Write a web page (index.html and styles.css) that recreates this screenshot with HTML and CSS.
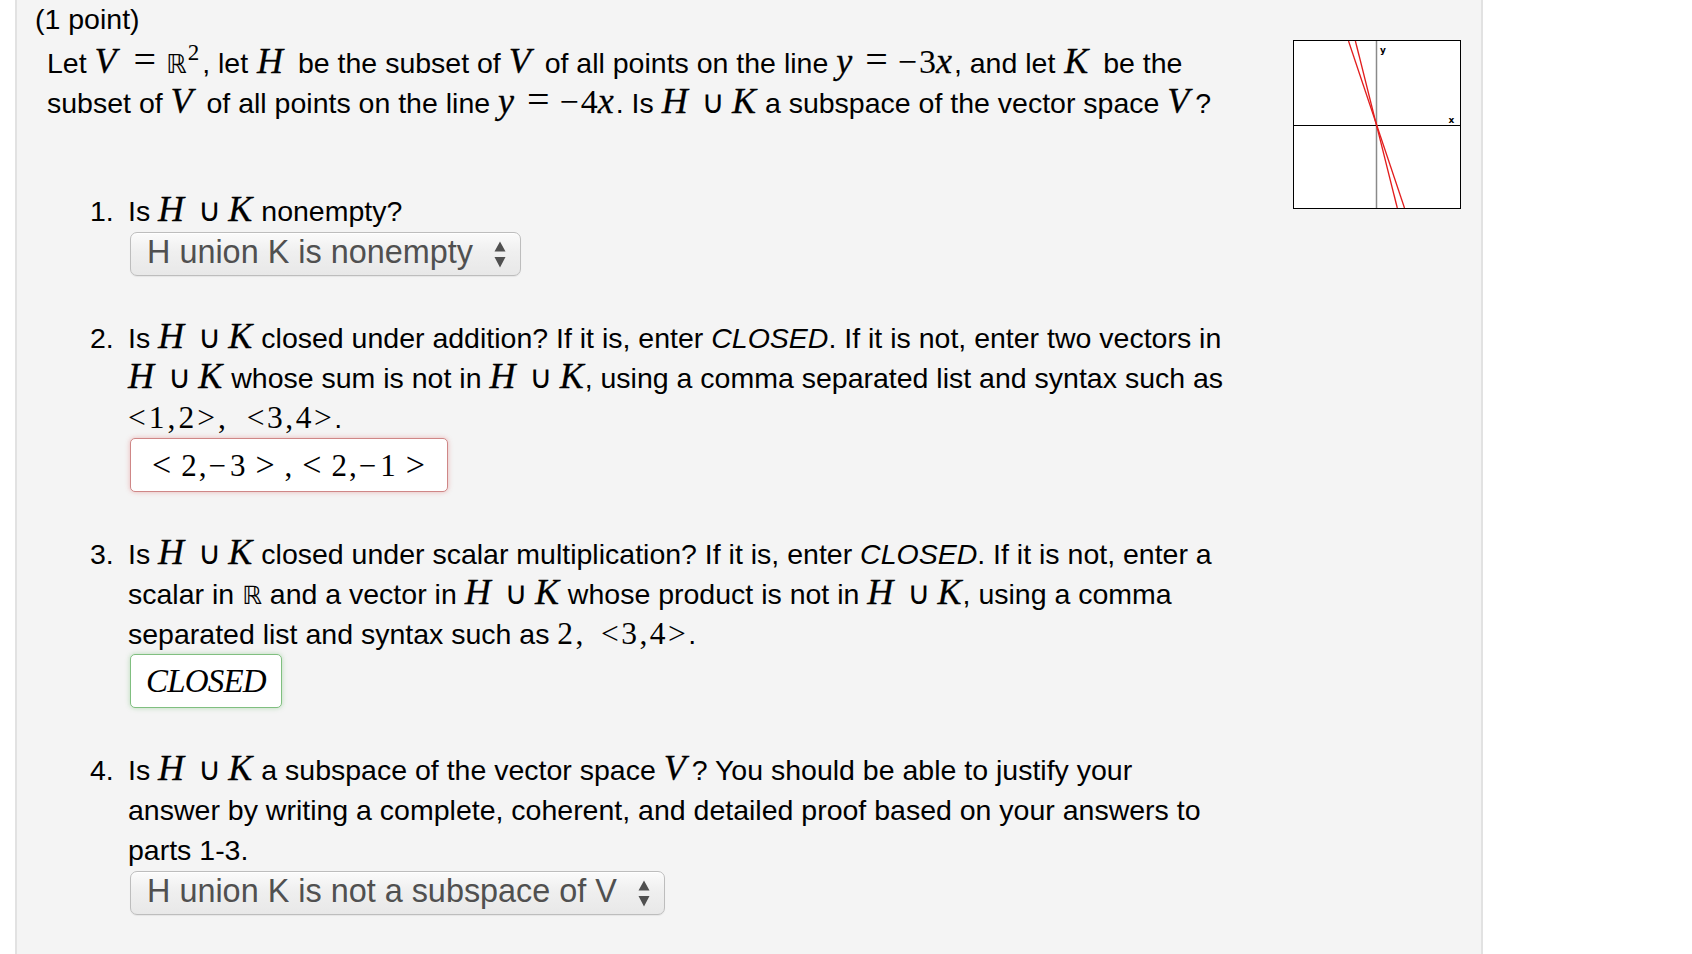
FILE: index.html
```html
<!DOCTYPE html>
<html lang="en">
<head>
<meta charset="utf-8">
<title>Problem</title>
<link rel="stylesheet" href="styles.css">
</head>
<body>
<div class="problem">
  <div class="pts">(1 point)</div>
  <div class="graph">
    <svg class="plot" width="168" height="169" viewBox="0 0 168 169">
      <rect x="0.5" y="0.5" width="167" height="168" fill="#fff" stroke="#000" stroke-width="1"/>
      <line x1="83.5" y1="1" x2="83.5" y2="168" stroke="#8a8a8a" stroke-width="1.5"/>
      <line x1="1" y1="85.5" x2="167" y2="85.5" stroke="#000" stroke-width="1"/>
      <line x1="55.5" y1="1" x2="111.5" y2="168" stroke="#e21d1d" stroke-width="1.3"/>
      <line x1="62.4" y1="1" x2="104.3" y2="168" stroke="#e21d1d" stroke-width="1.3"/>
      <text x="87" y="12.5" class="axis-label">y</text>
      <text x="155.5" y="82.5" class="axis-label">x</text>
    </svg>
  </div>
  <div class="intro">Let <span class="mi mi-v">V</span><span class="rel">=</span><span class="bb">ℝ</span><span class="msup">2</span>, let <span class="mi mi-h solo">H</span> be the subset of <span class="mi mi-v">V</span> of all points on the line <span class="mi">y</span><span class="rel">=</span><span class="mn"><span class="minus">−</span>3</span><span class="mi">x</span>, and let <span class="mi mi-k solo">K</span> be the<br>subset of <span class="mi mi-v">V</span> of all points on the line <span class="mi">y</span><span class="rel">=</span><span class="mn"><span class="minus">−</span>4</span><span class="mi">x</span>. Is <span class="mi mi-h">H</span> <span class="cup">∪</span> <span class="mi mi-k">K</span> a subspace of the vector space <span class="mi mi-v">V</span>?</div>

  <ol class="parts">
    <li class="part">
      <span class="num">1.</span>
      <div class="body">
        <div class="q">Is <span class="mi mi-h">H</span> <span class="cup">∪</span> <span class="mi mi-k">K</span> nonempty?</div>
        <div class="select">
          <span class="sel-text">H union K is nonempty</span>
          <svg class="sel-arrows" width="12" height="27" viewBox="0 0 12 27"><path d="M6 0.5 L11.5 10.5 L0.5 10.5 Z M0.5 16 L11.5 16 L6 26.5 Z" fill="#505050"/></svg>
        </div>
      </div>
    </li>
    <li class="part">
      <span class="num">2.</span>
      <div class="body">
        <div class="q">Is <span class="mi mi-h">H</span> <span class="cup">∪</span> <span class="mi mi-k">K</span> closed under addition? If it is, enter <i>CLOSED</i>. If it is not, enter two vectors in<br><span class="mi mi-h">H</span> <span class="cup">∪</span> <span class="mi mi-k">K</span> whose sum is not in <span class="mi mi-h">H</span> <span class="cup">∪</span> <span class="mi mi-k">K</span>, using a comma separated list and syntax such as<br><span class="ex ex-first">&lt;1,2&gt;,</span><span class="ex ex-gap">&lt;3,4&gt;</span>.</div>
        <div class="ans ans-bad"><span class="ans-math"><span class="mr first">&lt;</span>2,<span class="minus">−</span>3<span class="mr">&gt;</span>,<span class="mr">&lt;</span>2,<span class="minus">−</span>1<span class="mr last">&gt;</span></span></div>
      </div>
    </li>
    <li class="part">
      <span class="num">3.</span>
      <div class="body">
        <div class="q">Is <span class="mi mi-h">H</span> <span class="cup">∪</span> <span class="mi mi-k">K</span> closed under scalar multiplication? If it is, enter <i>CLOSED</i>. If it is not, enter a<br>scalar in <span class="bb bb-text">ℝ</span> and a vector in <span class="mi mi-h">H</span> <span class="cup">∪</span> <span class="mi mi-k">K</span> whose product is not in <span class="mi mi-h">H</span> <span class="cup">∪</span> <span class="mi mi-k">K</span>, using a comma<br>separated list and syntax such as <span class="ex">2,</span><span class="ex ex-gap ex-gap-s">&lt;3,4&gt;</span>.</div>
        <div class="ans ans-ok"><span class="ans-word">CLOSED</span></div>
      </div>
    </li>
    <li class="part">
      <span class="num">4.</span>
      <div class="body">
        <div class="q">Is <span class="mi mi-h">H</span> <span class="cup">∪</span> <span class="mi mi-k">K</span> a subspace of the vector space <span class="mi mi-v">V</span>? You should be able to justify your<br>answer by writing a complete, coherent, and detailed proof based on your answers to<br>parts 1-3.</div>
        <div class="select">
          <span class="sel-text">H union K is not a subspace of V</span>
          <svg class="sel-arrows" width="12" height="27" viewBox="0 0 12 27"><path d="M6 0.5 L11.5 10.5 L0.5 10.5 Z M0.5 16 L11.5 16 L6 26.5 Z" fill="#505050"/></svg>
        </div>
      </div>
    </li>
  </ol>
</div>
</body>
</html>
```

FILE: styles.css
```css
html, body {
  margin: 0;
  padding: 0;
  background: #ffffff;
}

body {
  font-family: "Liberation Sans", Arial, Helvetica, sans-serif;
  color: #000;
  overflow: hidden;
}

.problem {
  margin-left: 15px;
  width: 1468px;
  min-height: 954px;
  box-sizing: border-box;
  background: #f4f4f4;
  border-left: 2px solid #e2e2e2;
  border-right: 2px solid #e2e2e2;
  padding: 0 20px 0 18px;
  font-size: 28.5px;
  line-height: 40px;
}

.pts {
  line-height: 38px;
}

.graph {
  float: right;
  margin-top: 2px;
  width: 168px;
  height: 169px;
}

.plot {
  display: block;
}

.axis-label {
  font-family: "DejaVu Sans", sans-serif;
  font-size: 9px;
  font-weight: bold;
  fill: #000;
}

.intro {
  margin-top: 5px;
  margin-left: 12px;
}

/* math pieces */
.mi {
  font-family: "Liberation Serif", "Times New Roman", serif;
  font-style: italic;
  font-size: 36px;
  line-height: 0;
  padding-right: 2px;
  -webkit-text-stroke: 0.3px #000;
}

.mi-h {
  padding-right: 6px;
}

.mi-k {
  padding-right: 1px;
}

.mi-v {
  padding-right: 6px;
}

.mi-h.solo,
.mi-k.solo {
  padding-right: 7px;
  margin-left: 1px;
}

.mn {
  font-family: "Liberation Serif", "Times New Roman", serif;
  font-size: 34px;
  line-height: 0;
}

.minus {
  padding: 0 2px 0 0;
}

.rel {
  font-family: "Liberation Serif", "Times New Roman", serif;
  font-size: 40px;
  line-height: 0;
  margin: 0 10px 0 11px;
}

.bb {
  font-family: "DejaVu Sans", sans-serif;
  font-size: 26px;
  line-height: 0;
}

.bb-text {
  font-size: 25px;
}

.msup {
  font-family: "Liberation Serif", "Times New Roman", serif;
  font-size: 23px;
  line-height: 0;
  vertical-align: 0.55em;
  margin-left: 1px;
  margin-right: 3px;
}

.cup {
  font-family: "DejaVu Sans", sans-serif;
  font-size: 32px;
  line-height: 0;
  margin-right: -1px;
}

.ex {
  font-family: "Liberation Serif", "Times New Roman", serif;
  font-size: 31.5px;
  line-height: 0;
  letter-spacing: 2.5px;
}

.ex-first {
  letter-spacing: 3px;
}

.ex-gap {
  margin-left: 18px;
}

.ex-gap-s {
  margin-left: 15px;
}

/* parts list */
.parts {
  list-style: none;
  margin: 68px 0 0 55px;
  padding: 0;
}

.part {
  display: flex;
}

.part + .part {
  margin-top: 42px;
}

.num {
  flex: none;
  width: 38px;
}

.body {
  flex: 1;
  min-width: 0;
}

.q {
  white-space: nowrap;
}

/* select look-alike */
.select {
  display: flex;
  align-items: center;
  width: fit-content;
  height: 44px;
  box-sizing: border-box;
  margin: 1px 0 0 2px;
  padding: 0 14px 3px 16px;
  border: 1px solid #bdbdbd;
  border-radius: 7px;
  background: linear-gradient(to bottom, #fbfbfb 0%, #efefef 45%, #e8e8e8 100%);
  box-shadow: inset 0 1px 0 #ffffff, 0 1px 1px rgba(0, 0, 0, 0.06);
  font-size: 32.4px;
  line-height: 1;
  color: #505050;
}

.sel-arrows {
  margin-left: 21px;
  margin-top: 3px;
  flex: none;
}

/* answer inputs */
.ans {
  display: flex;
  align-items: center;
  height: 54px;
  box-sizing: border-box;
  margin-left: 2px;
  background: #ffffff;
  border-radius: 5px;
}

.ans-bad {
  width: 318px;
  padding-left: 21px;
  border: 1px solid #cf8787;
  box-shadow: 0 0 5px rgba(214, 70, 70, 0.35);
}

.ans-ok {
  width: 152px;
  padding-left: 15px;
  border: 1px solid #80bf80;
  box-shadow: 0 0 5px rgba(70, 170, 70, 0.35);
}

.ans-math {
  font-family: "Liberation Serif", "Times New Roman", serif;
  font-size: 31px;
  line-height: 1;
  letter-spacing: 2px;
}

.mr {
  font-size: 34px;
  margin: 0 8px;
}

.mr.first {
  margin-left: 0;
}

.mr.last {
  margin-right: 0;
}

.ans-word {
  font-family: "Liberation Serif", "Times New Roman", serif;
  font-style: italic;
  font-size: 33px;
  line-height: 1;
  letter-spacing: -0.8px;
}
```
